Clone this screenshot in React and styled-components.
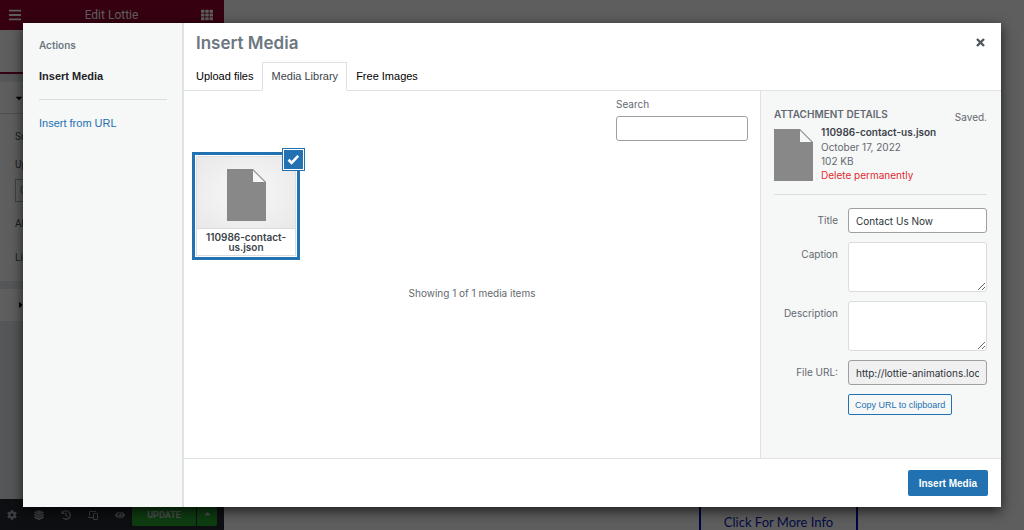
import React from 'react';
import styled, { createGlobalStyle } from 'styled-components';
import {
  FaBars, FaTh, FaCog, FaLayerGroup, FaHistory, FaEye,
  FaCaretUp, FaCaretDown, FaCaretRight,
} from 'react-icons/fa';

const GlobalStyle = createGlobalStyle`
  *, *::before, *::after {
    box-sizing: border-box;
  }
  body {
    margin: 0;
    font-family: Inter, "Liberation Sans", sans-serif;
    font-size: 10px;
    color: #646970;
  }
  button, input, textarea {
    font: inherit;
    margin: 0;
  }
`;

const Page = styled.div`
  position: relative;
  display: flex;
  height: 100vh;
  overflow: hidden;
  background: #fff;
`;

// Editor panel
const Panel = styled.aside`
  display: flex;
  flex-direction: column;
  width: 224px;
  flex-shrink: 0;
  background: #e6e9ec;
  font-family: Roboto, sans-serif;
`;

const PanelHeader = styled.header`
  display: flex;
  align-items: center;
  justify-content: space-between;
  height: 30px;
  padding: 0 11px 0 8px;
  background: #93002c;
  color: #fff;
`;

const PanelTitle = styled.span`
  font-size: 12px;
`;

const IconButton = styled.button`
  display: flex;
  padding: 0;
  border: 0;
  background: none;
  color: inherit;
  font-size: ${(props) => props.$size || 10}px;
`;

const PanelTabs = styled.div`
  height: 44px;
  background: #fff;
  border-bottom: 2px solid #93003c;
`;

const PanelSection = styled.section`
  margin-top: 8px;
  background: #fff;
`;

const SectionHeading = styled.div`
  display: flex;
  align-items: center;
  height: 32px;
  padding-left: ${(props) => (props.$open ? 14 : 16)}px;
  color: #000;
  border-bottom: ${(props) => (props.$open ? '1px solid #d5dadf' : '0')};
`;

const SectionBody = styled.div`
  display: flex;
  flex-direction: column;
  gap: 16px;
  padding: 17px 15px;
  color: #495157;
  line-height: 12px;
`;

const UrlGroup = styled.label`
  display: flex;
  flex-direction: column;
  gap: 8px;
`;

const UrlInput = styled.input`
  height: 23px;
  padding: 0 4px;
  border: 1px solid #a4afb7;
  color: #6d7882;
`;

const ControlRow = styled.div`
  height: 18px;
`;

const PanelFooter = styled.footer`
  display: flex;
  align-items: center;
  height: 31px;
  margin-top: auto;
  padding-left: 7px;
  background: #262b33;
  color: #a4afb7;
`;

const FooterTools = styled.div`
  display: flex;
  flex: 1;
  gap: 17px;
`;

const UpdateButton = styled.button`
  height: 22px;
  width: ${(props) => (props.$narrow ? 20 : 64)}px;
  margin-right: ${(props) => (props.$narrow ? 7 : 1)}px;
  padding: 0;
  border: 0;
  border-radius: ${(props) => (props.$narrow ? '0 2px 2px 0' : '2px 0 0 2px')};
  background: #28a52f;
  color: #d5dadf;
  font-size: 9px;
  font-weight: 700;
`;

const Canvas = styled.main`
  display: flex;
  flex: 1;
  align-items: flex-end;
  justify-content: flex-end;
  padding-right: 166px;
`;

const CanvasLink = styled.a`
  width: 159px;
  height: 34px;
  padding-top: 18px;
  border: 2px solid #0008c8;
  border-width: 1px 2px 0;
  color: #0a1fb4;
  font-family: Lato, sans-serif;
  font-size: 13px;
  line-height: 14px;
  text-align: center;
  text-decoration: none;
`;

// Media modal
const Backdrop = styled.div`
  position: absolute;
  inset: 0;
  display: flex;
  padding: 23px;
  background: rgba(0, 0, 0, 0.63);
`;

const Modal = styled.div`
  display: flex;
  flex: 1;
  min-width: 0;
  background: #fff;
  box-shadow: 0 4px 12px rgba(0, 0, 0, 0.7);
`;

const Menu = styled.nav`
  display: flex;
  flex-direction: column;
  width: 161px;
  flex-shrink: 0;
  padding: 15px 15px 16px 16px;
  background: #f6f7f7;
  border-right: 2px solid #dfe1e2;
`;

const MenuTitle = styled.h2`
  margin: 0 0 17px;
  color: #6c7781;
  font-size: 10px;
  font-weight: 600;
  line-height: 14px;
`;

const MenuItem = styled.button`
  padding: 0;
  border: 0;
  background: none;
  color: ${(props) => (props.$active ? '#1d2327' : '#2271b1')};
  font-family: "Liberation Sans", sans-serif;
  font-size: 11px;
  font-weight: ${(props) => (props.$active ? 700 : 400)};
  line-height: 14px;
  text-align: left;
`;

const MenuDivider = styled.hr`
  width: 100%;
  margin: 16px 0;
  border: 0;
  border-top: 1px solid #dcdcde;
`;

const Frame = styled.div`
  display: flex;
  flex: 1;
  flex-direction: column;
  min-width: 0;
`;

const FrameHeader = styled.header`
  display: flex;
  align-items: center;
  justify-content: space-between;
  height: 39px;
  padding: 0 16px 0 12px;
  color: #50575e;
`;

const FrameTitle = styled.h1`
  margin: 0;
  color: #6c7781;
  font-size: 17px;
  font-weight: 600;
  line-height: 22px;
`;

const Tabs = styled.div`
  display: flex;
  height: 29px;
  padding-left: 3px;
  border-bottom: 1px solid #dfe1e2;
`;

const Tab = styled.button`
  height: 29px;
  padding: 0 8px 2px;
  border: 1px solid transparent;
  ${(props) => props.$active && `
    border-color: #dfe1e2;
    border-bottom-color: #fff;
  `}
  background: none;
  color: ${(props) => (props.$active ? '#3c434a' : '#000')};
  font-family: "Liberation Sans", sans-serif;
  font-size: 11px;
`;

const Content = styled.div`
  display: flex;
  flex: 1;
  min-height: 0;
`;

const Browser = styled.section`
  flex: 1;
  padding: 6px 12px 0 8px;
`;

const Search = styled.label`
  display: flex;
  flex-direction: column;
  gap: 5px;
  width: 132px;
  margin-left: auto;
  line-height: 14px;
`;

const TextField = styled.input`
  width: 100%;
  min-width: 0;
  height: 25px;
  padding: 0 7px;
  border: 1px solid #9c9fa3;
  border-radius: 3px;
  background: ${(props) => (props.readOnly ? '#f0f0f1' : '#fff')};
  color: #2c3338;
`;

const Attachments = styled.ul`
  display: flex;
  margin: 11px 0 26px;
  padding: 0;
  list-style: none;
`;

const Attachment = styled.li`
  position: relative;
  display: flex;
  flex-direction: column;
  width: 108px;
  height: 108px;
  padding: 1px;
  border: 3px solid #2271b1;
`;

const Preview = styled.div`
  display: flex;
  flex: 1;
  align-items: center;
  justify-content: center;
  padding-top: 4px;
  border: 1px solid #dcdcde;
  border-bottom: 0;
  background: radial-gradient(#f2f2f2 40%, #e8e8e8);
`;

const Filename = styled.div`
  height: 28px;
  padding: 3px 8px 0;
  border: 1px solid #dcdcde;
  color: #3c434a;
  font-weight: 600;
  line-height: 10px;
  text-align: center;
`;

const CheckButton = styled.button`
  position: absolute;
  top: -7px;
  right: -8px;
  display: grid;
  place-items: center;
  width: 23px;
  height: 23px;
  padding: 0;
  border: 1px solid #2271b1;
  box-shadow: inset 0 0 0 1px #fff;
  background: #2271b1;
  color: #fff;
`;

const Count = styled.p`
  margin: 0;
  padding-left: 4px;
  line-height: 14px;
  text-align: center;
`;

const Details = styled.aside`
  width: 241px;
  flex-shrink: 0;
  padding: 16px 14px 0 13px;
  background: #f6f7f7;
  border-left: 1px solid #dfe1e2;
`;

const DetailsHeader = styled.div`
  display: flex;
  justify-content: space-between;
  line-height: 14px;
`;

const DetailsTitle = styled.h2`
  margin: 0;
  font-size: 10px;
  font-weight: 600;
`;

const Saved = styled.span`
  padding-top: 3px;
`;

const FileInfo = styled.div`
  display: flex;
  gap: 8px;
  padding-bottom: 10px;
  border-bottom: 1px solid #dcdcde;
  line-height: 14px;
`;

const FileIconWrap = styled.div`
  padding-top: 5px;
`;

const FileText = styled.div`
  display: flex;
  flex-direction: column;
  align-items: flex-start;
`;

const FileName = styled.strong`
  color: #3c434a;
  font-weight: 600;
  line-height: 16px;
`;

const DeleteButton = styled.button`
  padding: 0;
  border: 0;
  background: none;
  color: #e02b33;
`;

const Fields = styled.div`
  display: flex;
  flex-direction: column;
  gap: 9px;
  padding-top: 13px;
`;

const Field = styled.div`
  display: grid;
  grid-template-columns: 64px 1fr;
  column-gap: 10px;
`;

const FieldLabel = styled.label`
  padding-top: 5px;
  line-height: 14px;
  text-align: right;
`;

const TextArea = styled.textarea`
  display: block;
  width: 100%;
  height: 50px;
  border: 1px solid #dcdcde;
  border-radius: 3px;
  background: #fff;
  resize: vertical;
`;

const CopyButton = styled.button`
  grid-column: 2;
  justify-self: start;
  height: 21px;
  padding: 0 6px;
  border: 1px solid #2271b1;
  border-radius: 2px;
  background: #f6f7f7;
  color: #2271b1;
  font-family: "Liberation Sans", sans-serif;
  font-size: 9px;
`;

const FrameFooter = styled.footer`
  display: flex;
  align-items: center;
  justify-content: flex-end;
  height: 49px;
  padding: 0 13px;
  border-top: 1px solid #dfe1e2;
`;

const PrimaryButton = styled.button`
  height: 26px;
  padding: 0 11px;
  border: 0;
  border-radius: 2px;
  background: #2271b1;
  color: #fff;
  font-family: "Liberation Sans", sans-serif;
  font-size: 10px;
  font-weight: 700;
`;

const FileIcon = () => (
  <svg width="39" height="52" viewBox="0 0 39 52" aria-hidden="true">
    <path d="M0 0H26L39 13V52H0Z" fill="#888" />
    <path d="M26 1.5V13H37.5Z" fill="#f6f7f7" />
  </svg>
);

const DevicesIcon = () => (
  <svg width="10" height="10" viewBox="0 0 10 10" fill="none" stroke="currentColor" aria-hidden="true">
    <path d="M1.5 6V1.5H8M0 7.5H5" />
    <rect x="5.5" y="3.5" width="4" height="6" rx="0.5" />
  </svg>
);

const CheckIcon = () => (
  <svg width="13" height="11" viewBox="0 0 13 11" fill="none" stroke="currentColor" strokeWidth="2.6" aria-hidden="true">
    <path d="M1.5 5.8L4.6 8.8L11.2 1.8" />
  </svg>
);

const CloseIcon = () => (
  <svg width="9" height="9" viewBox="0 0 9 9" fill="none" stroke="currentColor" strokeWidth="2.4" aria-hidden="true">
    <path d="M1 1L8 8M8 1L1 8" />
  </svg>
);

const EditorPanel = () => (
  <Panel>
    <PanelHeader>
      <IconButton $size={14} aria-label="Menu"><FaBars /></IconButton>
      <PanelTitle>Edit Lottie</PanelTitle>
      <IconButton $size={12} aria-label="Widgets"><FaTh /></IconButton>
    </PanelHeader>
    <PanelTabs />
    <PanelSection>
      <SectionHeading $open><FaCaretDown /></SectionHeading>
      <SectionBody>
        <span>Source</span>
        <UrlGroup>
          Upload JSON File
          <UrlInput defaultValue="Click" />
        </UrlGroup>
        <ControlRow>Alignment</ControlRow>
        <span>Link</span>
      </SectionBody>
    </PanelSection>
    <PanelSection>
      <SectionHeading><FaCaretRight /></SectionHeading>
    </PanelSection>
    <PanelFooter>
      <FooterTools>
        <IconButton aria-label="Settings"><FaCog /></IconButton>
        <IconButton aria-label="Navigator"><FaLayerGroup /></IconButton>
        <IconButton aria-label="History"><FaHistory /></IconButton>
        <IconButton aria-label="Responsive mode"><DevicesIcon /></IconButton>
        <IconButton aria-label="Preview"><FaEye /></IconButton>
      </FooterTools>
      <UpdateButton>UPDATE</UpdateButton>
      <UpdateButton $narrow aria-label="Save options"><FaCaretUp /></UpdateButton>
    </PanelFooter>
  </Panel>
);

const AttachmentDetails = () => (
  <Details>
    <DetailsHeader>
      <DetailsTitle>ATTACHMENT DETAILS</DetailsTitle>
      <Saved>Saved.</Saved>
    </DetailsHeader>
    <FileInfo>
      <FileIconWrap><FileIcon /></FileIconWrap>
      <FileText>
        <FileName>110986-contact-us.json</FileName>
        <span>October 17, 2022</span>
        <span>102 KB</span>
        <DeleteButton>Delete permanently</DeleteButton>
      </FileText>
    </FileInfo>
    <Fields>
      <Field>
        <FieldLabel htmlFor="title">Title</FieldLabel>
        <TextField id="title" defaultValue="Contact Us Now" />
      </Field>
      <Field>
        <FieldLabel htmlFor="caption">Caption</FieldLabel>
        <TextArea id="caption" />
      </Field>
      <Field>
        <FieldLabel htmlFor="description">Description</FieldLabel>
        <TextArea id="description" />
      </Field>
      <Field>
        <FieldLabel htmlFor="url">File URL:</FieldLabel>
        <TextField id="url" readOnly value="http://lottie-animations.local/contact-us.json" />
      </Field>
      <Field>
        <CopyButton>Copy URL to clipboard</CopyButton>
      </Field>
    </Fields>
  </Details>
);

const App = () => (
  <Page>
    <GlobalStyle />
    <EditorPanel />
    <Canvas>
      <CanvasLink href="#info">Click For More Info</CanvasLink>
    </Canvas>
    <Backdrop>
      <Modal role="dialog" aria-label="Insert Media">
        <Menu>
          <MenuTitle>Actions</MenuTitle>
          <MenuItem $active>Insert Media</MenuItem>
          <MenuDivider />
          <MenuItem>Insert from URL</MenuItem>
        </Menu>
        <Frame>
          <FrameHeader>
            <FrameTitle>Insert Media</FrameTitle>
            <IconButton aria-label="Close"><CloseIcon /></IconButton>
          </FrameHeader>
          <Tabs>
            <Tab>Upload files</Tab>
            <Tab $active>Media Library</Tab>
            <Tab>Free Images</Tab>
          </Tabs>
          <Content>
            <Browser>
              <Search>
                Search
                <TextField type="search" />
              </Search>
              <Attachments>
                <Attachment>
                  <Preview><FileIcon /></Preview>
                  <Filename>110986-contact-us.json</Filename>
                  <CheckButton aria-label="Deselect"><CheckIcon /></CheckButton>
                </Attachment>
              </Attachments>
              <Count>Showing 1 of 1 media items</Count>
            </Browser>
            <AttachmentDetails />
          </Content>
          <FrameFooter>
            <PrimaryButton>Insert Media</PrimaryButton>
          </FrameFooter>
        </Frame>
      </Modal>
    </Backdrop>
  </Page>
);

export default App;
